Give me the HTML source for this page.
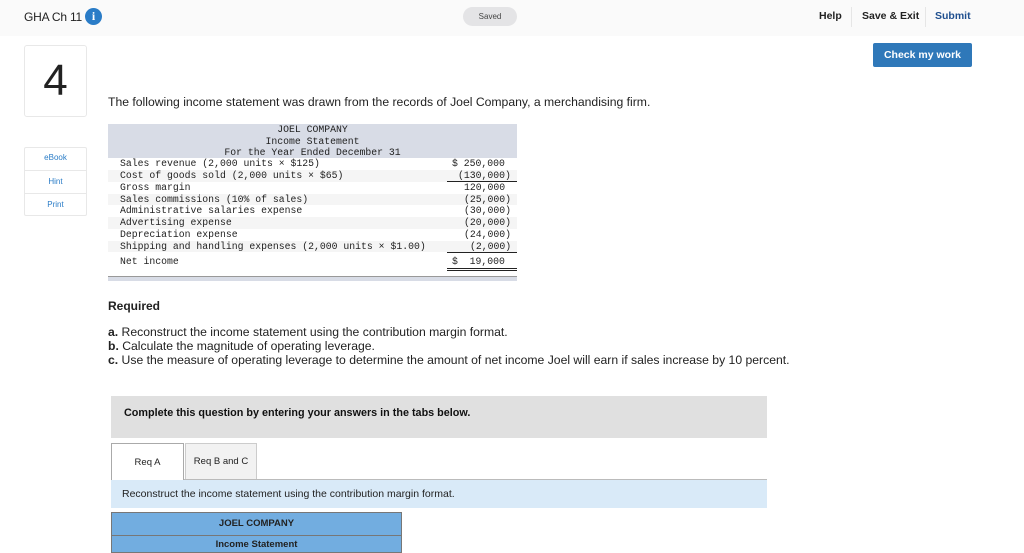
<!DOCTYPE html>
<html><head><style>
*{margin:0;padding:0;box-sizing:border-box}
body{width:1024px;height:553px;background:#fff;font-family:"Liberation Sans",sans-serif;position:relative;overflow:hidden;color:#222}
.hdr{position:absolute;left:0;top:0;width:1024px;height:36px;background:#fafafa}
.abs{position:absolute;white-space:nowrap}
.mono{font-family:"Liberation Mono",monospace;font-size:9.8px;color:#222}
.row{position:absolute;left:108px;width:409px;height:11.7px}
.row span{position:absolute;top:0;line-height:11.7px;white-space:pre}
</style></head><body>
<div class="hdr"></div>
<div class="abs" style="left:24px;top:10px;font-size:12px;color:#222;letter-spacing:-0.2px">GHA Ch 11</div>
<div class="abs" style="left:85px;top:8px;width:17px;height:17px;border-radius:50%;background:#2a7cc7;color:#fff;font:bold 12px 'Liberation Serif',serif;text-align:center;line-height:17px">i</div>
<div class="abs" style="left:463px;top:7px;width:54px;height:19px;border-radius:10px;background:#e4e4e6;font-size:8px;color:#444;text-align:center;line-height:19px">Saved</div>
<div class="abs" style="left:819px;top:10px;font-size:10.5px;font-weight:bold;color:#222">Help</div>
<div class="abs" style="left:851px;top:7px;width:1px;height:20px;background:#e6e6e6"></div>
<div class="abs" style="left:862px;top:10px;font-size:10.5px;font-weight:bold;color:#222">Save &amp; Exit</div>
<div class="abs" style="left:925px;top:7px;width:1px;height:20px;background:#e6e6e6"></div>
<div class="abs" style="left:935px;top:10px;font-size:10.5px;font-weight:bold;color:#1f4f8f">Submit</div>
<div class="abs" style="left:873px;top:43px;width:99px;height:24px;background:#2f78b9;border-radius:2px;color:#fff;font-size:10.5px;font-weight:bold;text-align:center;line-height:24px">Check my work</div>

<div class="abs" style="left:24px;top:45px;width:63px;height:72px;border:1px solid #e8e8e8;border-radius:3px;font-size:44px;text-align:center;line-height:70px;color:#222">4</div>
<div class="abs" style="left:24px;top:147px;width:63px;height:69px;border:1px solid #e8e8e8;border-radius:2px"></div>
<div class="abs" style="left:24px;top:170px;width:63px;height:1px;background:#e8e8e8"></div>
<div class="abs" style="left:24px;top:193px;width:63px;height:1px;background:#e8e8e8"></div>
<div class="abs" style="left:24px;top:153px;width:63px;text-align:center;font-size:8px;color:#2a7cc7">eBook</div>
<div class="abs" style="left:24px;top:177px;width:63px;text-align:center;font-size:8px;color:#2a7cc7">Hint</div>
<div class="abs" style="left:24px;top:200px;width:63px;text-align:center;font-size:8px;color:#2a7cc7">Print</div>

<div class="abs" style="left:108px;top:95px;font-size:12.2px">The following income statement was drawn from the records of Joel Company, a merchandising firm.</div>

<div class="abs" style="left:108px;top:124px;width:409px;height:34px;background:#d8dce6"></div>
<div class="abs mono" style="left:108px;top:124px;width:409px;text-align:center;line-height:11.5px">JOEL COMPANY<br>Income Statement<br>For the Year Ended December 31</div>
<div class="row mono" style="top:158px"><span style="left:12px">Sales revenue (2,000 units × $125)</span><span style="left:344px">$ 250,000</span></div>
<div class="row mono" style="top:170px;background:#f5f5f5"><span style="left:12px">Cost of goods sold (2,000 units × $65)</span><span style="left:350px">(130,000)</span></div>
<div class="abs" style="left:447px;top:181px;width:70px;height:1px;background:#222"></div>
<div class="row mono" style="top:182px"><span style="left:12px">Gross margin</span><span style="left:356px">120,000</span></div>
<div class="row mono" style="top:193.5px;background:#f5f5f5"><span style="left:12px">Sales commissions (10% of sales)</span><span style="left:356px">(25,000)</span></div>
<div class="row mono" style="top:205px"><span style="left:12px">Administrative salaries expense</span><span style="left:356px">(30,000)</span></div>
<div class="row mono" style="top:217px;background:#f5f5f5"><span style="left:12px">Advertising expense</span><span style="left:356px">(20,000)</span></div>
<div class="row mono" style="top:229px"><span style="left:12px">Depreciation expense</span><span style="left:356px">(24,000)</span></div>
<div class="row mono" style="top:240.5px;background:#f5f5f5"><span style="left:12px">Shipping and handling expenses (2,000 units × $1.00)</span><span style="left:362px">(2,000)</span></div>
<div class="abs" style="left:447px;top:252px;width:70px;height:1px;background:#222"></div>
<div class="row mono" style="top:255px;height:13px"><span style="left:12px;line-height:13px">Net income</span><span style="left:344px;line-height:13px">$  19,000</span></div>
<div class="abs" style="left:447px;top:268px;width:70px;height:1px;background:#222"></div>
<div class="abs" style="left:447px;top:270px;width:70px;height:1px;background:#222"></div>
<div class="abs" style="left:108px;top:276px;width:409px;height:5px;background:#d8dce6;border-top:1px solid #999"></div>

<div class="abs" style="left:108px;top:299px;font-size:12px;font-weight:bold">Required</div>
<div class="abs" style="left:108px;top:325px;font-size:12.2px;line-height:14px"><b>a.</b> Reconstruct the income statement using the contribution margin format.<br><b>b.</b> Calculate the magnitude of operating leverage.<br><b>c.</b> Use the measure of operating leverage to determine the amount of net income Joel will earn if sales increase by 10 percent.</div>

<div class="abs" style="left:111px;top:396px;width:656px;height:42px;background:#e0e0e0"></div>
<div class="abs" style="left:124px;top:407px;font-size:10.8px;font-weight:bold;color:#111">Complete this question by entering your answers in the tabs below.</div>

<div class="abs" style="left:111px;top:479px;width:656px;height:1px;background:#bbb"></div>
<div class="abs" style="left:111px;top:443px;width:73px;height:37px;border:1px solid #aaa;border-bottom:none;background:#fff;font-size:9.5px;text-align:center;line-height:37px">Req A</div>
<div class="abs" style="left:185px;top:443px;width:72px;height:36px;border:1px solid #ccc;border-bottom:none;background:#f2f2f2;font-size:9.5px;text-align:center;line-height:36px">Req B and C</div>
<div class="abs" style="left:111px;top:480px;width:656px;height:28px;background:#d9eaf8"></div>
<div class="abs" style="left:122px;top:488px;font-size:10.5px;color:#222">Reconstruct the income statement using the contribution margin format.</div>

<div class="abs" style="left:111px;top:512px;width:291px;height:41px;background:#72ade0;border:1px solid #777"></div>
<div class="abs" style="left:111px;top:535px;width:291px;height:1px;background:#777"></div>
<div class="abs" style="left:111px;top:518px;width:291px;text-align:center;font-size:9.5px;font-weight:bold;color:#222">JOEL COMPANY</div>
<div class="abs" style="left:111px;top:539px;width:291px;text-align:center;font-size:9.5px;font-weight:bold;color:#222">Income Statement</div>
</body></html>
